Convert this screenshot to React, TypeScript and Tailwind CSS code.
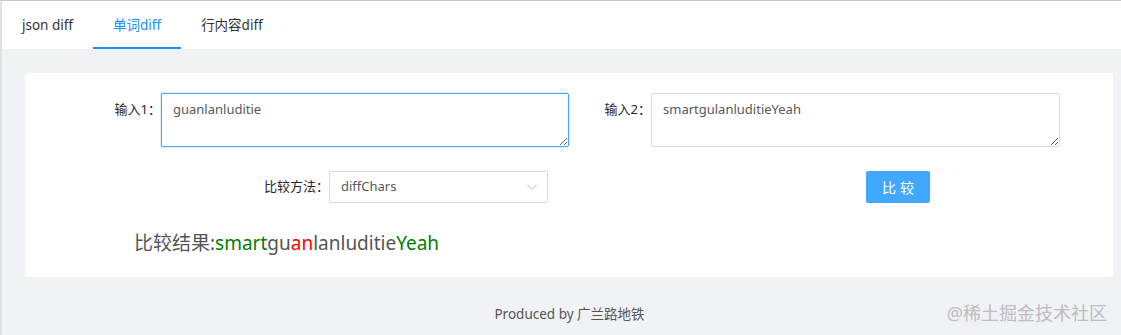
import { useState } from "react";

const font = "font-['Noto_Sans','Noto_Sans_CJK_SC',sans-serif]";

const tabs = ["json diff", "单词diff", "行内容diff"];

function ChevronDown() {
  return (
    <svg width="12" height="12" viewBox="0 0 12 12" fill="none" stroke="#bfbfbf" strokeWidth="1">
      <path d="M1.5 3.8 6 8.3l4.5-4.5" />
    </svg>
  );
}

export default function App() {
  const [active, setActive] = useState(1);
  const [left, setLeft] = useState("guanlanluditie");
  const [right, setRight] = useState("smartgulanluditieYeah");

  return (
    <div className={`${font} w-[1121px] h-[335px] bg-[#f0f2f5] border-t border-[#c8c8c8] border-l-2 border-l-[#dfe1e5] overflow-hidden`}>
      <div className="h-[48px] bg-white flex">
        {tabs.map((t, i) => (
          <button
            key={t}
            onClick={() => setActive(i)}
            className={`relative px-[20px] h-full text-[13.5px] ${
              active === i ? "text-[#1890ff]" : "text-[#333]"
            }`}
          >
            {t}
            {active === i && (
              <span className="absolute left-0 right-0 bottom-0 h-[2px] bg-[#1890ff]" />
            )}
          </button>
        ))}
      </div>

      <div className="ml-[23px] mt-[24px] w-[1088px] h-[204px] bg-white rounded-[4px] pt-[20px]">
        <div className="flex items-start">
          <label className="w-[136px] text-right text-[13px] text-[#262626] leading-[22px] pt-[5px]">
            输入1：
          </label>
          <textarea
            value={left}
            onChange={(e) => setLeft(e.target.value)}
            className="w-[408px] h-[54px] border border-[#40a9ff] rounded-[2px] px-[11px] py-[4px] text-[13px] leading-[22px] text-[#595959] outline-none shadow-[0_0_0_1px_rgba(24,144,255,0.15)]"
          />
          <label className="w-[82px] text-right text-[13px] text-[#262626] leading-[22px] pt-[5px]">
            输入2：
          </label>
          <textarea
            value={right}
            onChange={(e) => setRight(e.target.value)}
            className="w-[409px] h-[54px] border border-[#d9d9d9] rounded-[2px] px-[11px] py-[4px] text-[13px] leading-[22px] text-[#595959] outline-none"
          />
        </div>

        <div className="flex items-center mt-[24px]">
          <label className="w-[304px] text-right text-[13px] text-[#262626]">
            比较方法：
          </label>
          <div className="w-[219px] h-[32px] border border-[#d9d9d9] rounded-[2px] flex items-center justify-between pl-[11px] pr-[9px] text-[13px] text-[#595959]">
            <span>diffChars</span>
            <ChevronDown />
          </div>
          <button className="ml-[318px] w-[64px] h-[32px] rounded-[2px] bg-[#40a9ff] text-white text-[14px] tracking-[4px] pl-[4px]">
            比较
          </button>
        </div>

        <div className="ml-[109px] mt-[27px] text-[19px] text-[#555] leading-[26px]">
          比较结果:
          <span className="text-[#008000]">smart</span>
          <span>gu</span>
          <span className="text-[#ff0000]">an</span>
          <span>lanluditie</span>
          <span className="text-[#008000]">Yeah</span>
        </div>
      </div>

      <div className="relative h-[58px] pt-[16px] pl-[16px] flex items-center justify-center text-[13.5px] text-[#555]">
        Produced by 广兰路地铁
        <span className="absolute right-[14px] top-[23px] text-[18px] text-[#bdbdbd]">@稀土掘金技术社区</span>
      </div>
    </div>
  );
}
